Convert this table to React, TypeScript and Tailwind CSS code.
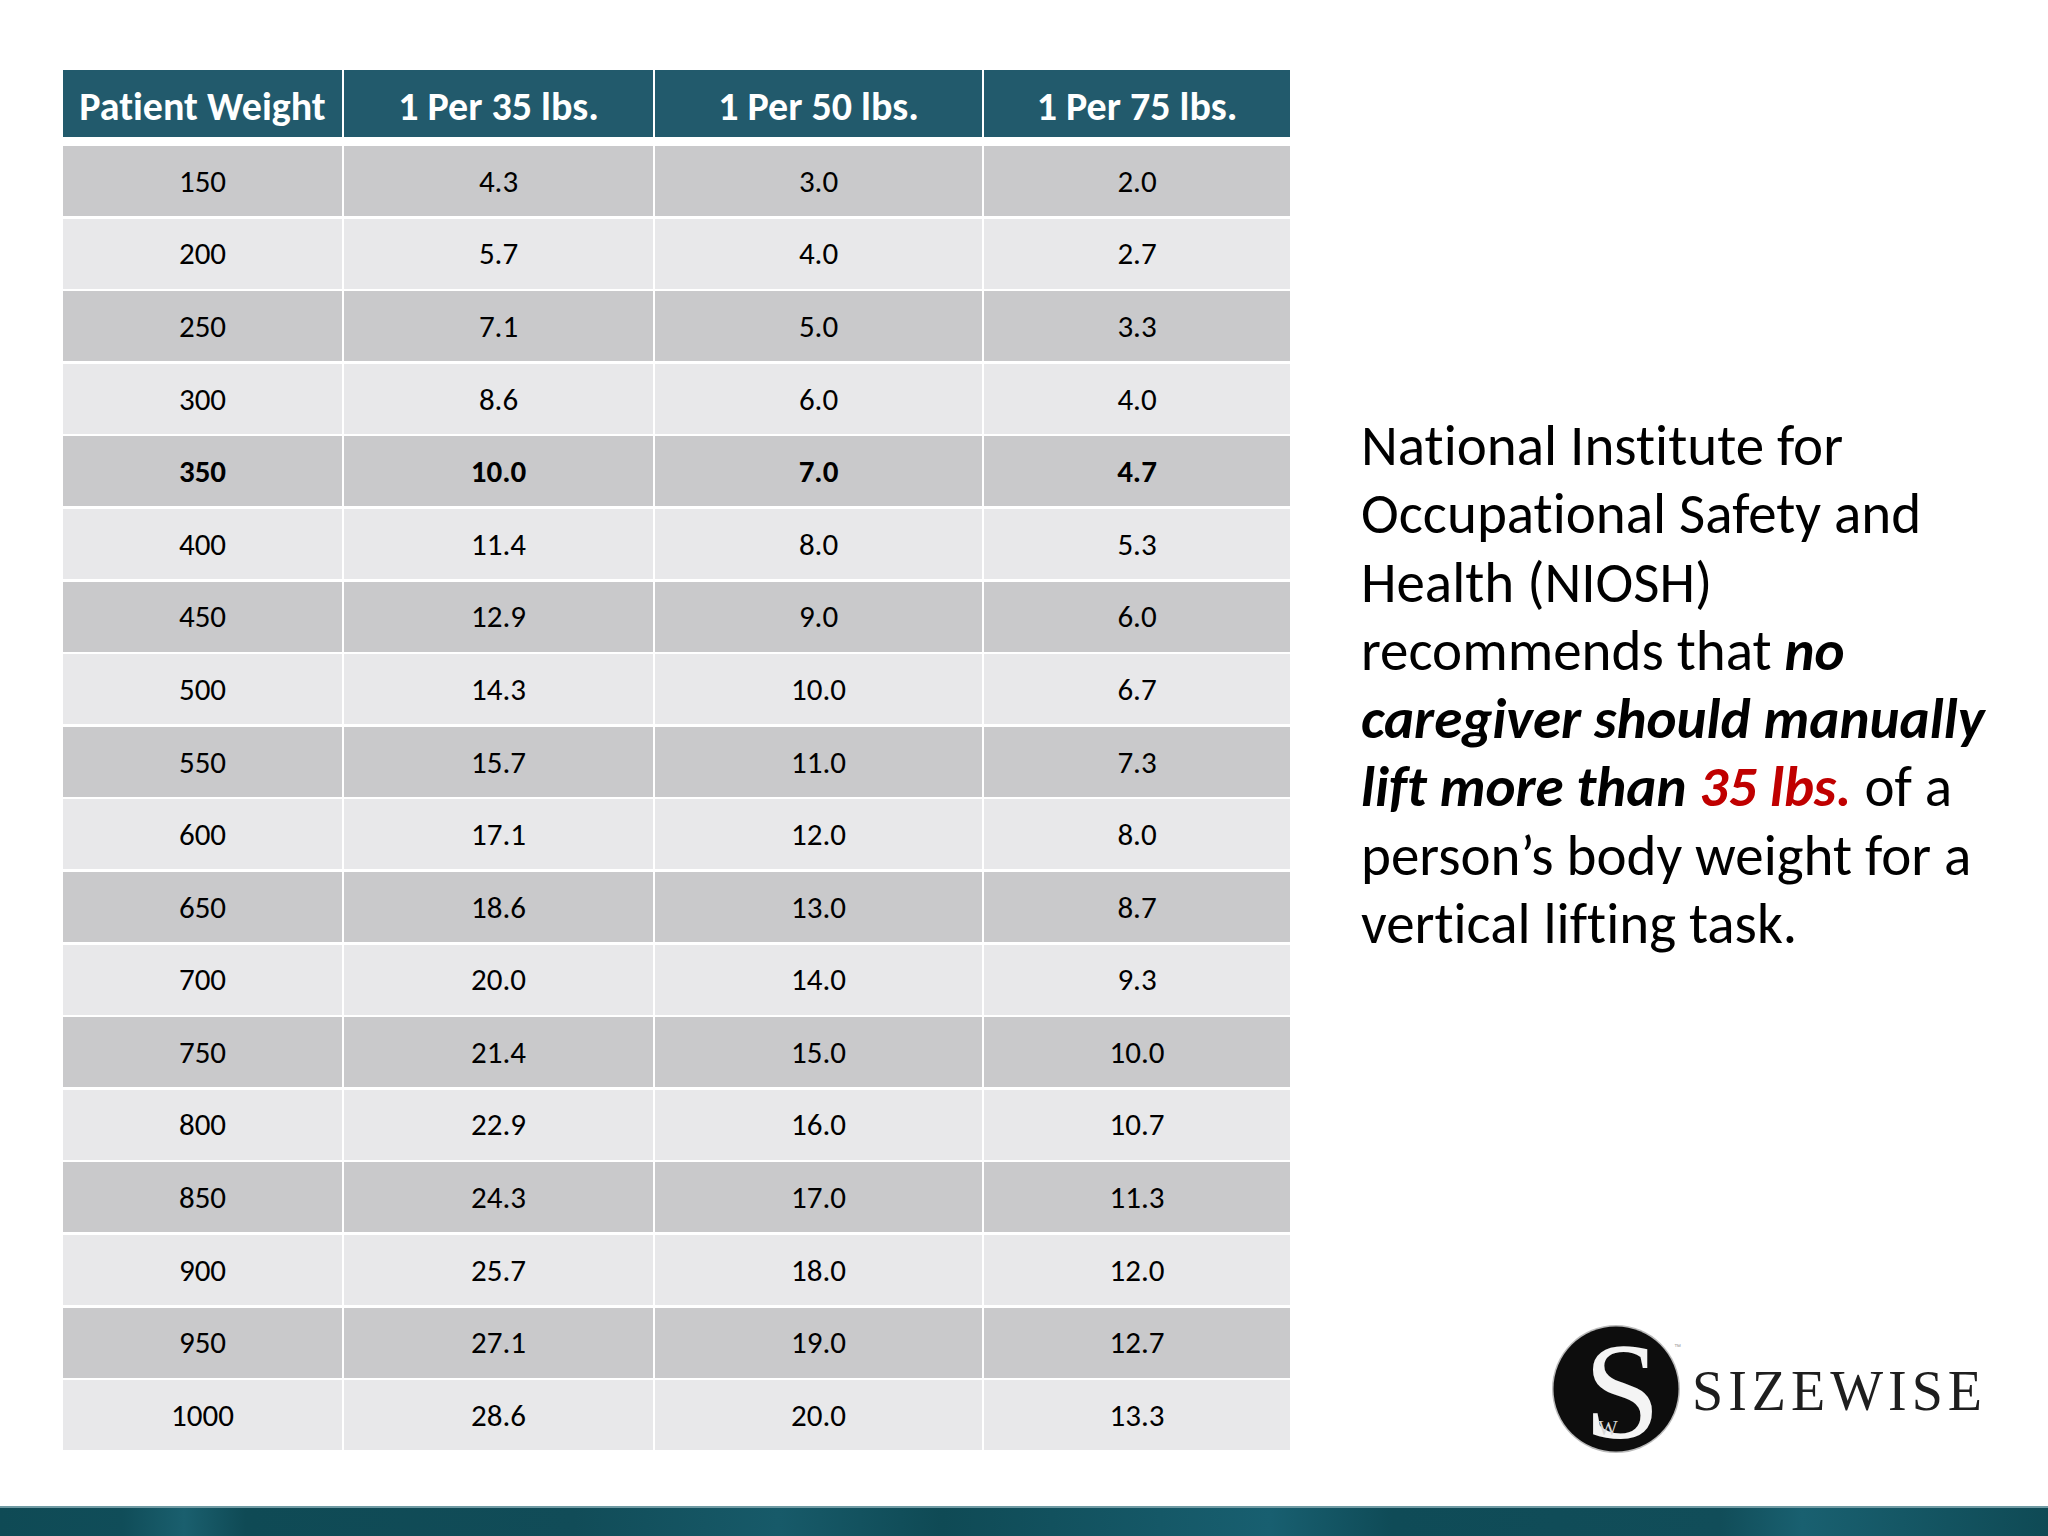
const rows: [string, string, string, string][] = [
  ["150", "4.3", "3.0", "2.0"],
  ["200", "5.7", "4.0", "2.7"],
  ["250", "7.1", "5.0", "3.3"],
  ["300", "8.6", "6.0", "4.0"],
  ["350", "10.0", "7.0", "4.7"],
  ["400", "11.4", "8.0", "5.3"],
  ["450", "12.9", "9.0", "6.0"],
  ["500", "14.3", "10.0", "6.7"],
  ["550", "15.7", "11.0", "7.3"],
  ["600", "17.1", "12.0", "8.0"],
  ["650", "18.6", "13.0", "8.7"],
  ["700", "20.0", "14.0", "9.3"],
  ["750", "21.4", "15.0", "10.0"],
  ["800", "22.9", "16.0", "10.7"],
  ["850", "24.3", "17.0", "11.3"],
  ["900", "25.7", "18.0", "12.0"],
  ["950", "27.1", "19.0", "12.7"],
  ["1000", "28.6", "20.0", "13.3"],
];

const headers = ["Patient Weight", "1 Per 35 lbs.", "1 Per 50 lbs.", "1 Per 75 lbs."];

function LiftTable() {
  return (
    <div className="flex flex-col">
      <div className="grid grid-cols-[279px_309px_327px_306px] gap-x-[2px] mb-[9px]">
        {headers.map((h) => (
          <div
            key={h}
            className="h-[67px] pt-[7px] bg-[#225a6c] text-white font-bold text-[40px] flex items-center justify-center"
          >
            {h}
          </div>
        ))}
      </div>
      <div className="grid grid-cols-[279px_309px_327px_306px] gap-x-[2px] gap-y-[2.6px]">
        {rows.map((r, i) =>
          r.map((cell, j) => (
            <div
              key={`${i}-${j}`}
              className={`h-[70px] flex items-center justify-center text-[31px] text-black ${
                i % 2 === 0 ? "bg-[#c9c9cb]" : "bg-[#e8e8ea]"
              } ${r[0] === "350" ? "font-bold" : ""}`}
            >
              {cell}
            </div>
          ))
        )}
      </div>
    </div>
  );
}

function SizewiseLogo() {
  return (
    <div className="flex items-center gap-[10px] ml-[189px]">
      <svg width="132" height="132" viewBox="-2 -2 132 132" className="shrink-0">
        <circle cx="64" cy="64" r="64" fill="#3a3a3a" opacity="0.35" />
        <circle cx="64" cy="64" r="62.5" fill="#0d0d0d" />
        <text
          x="70"
          y="113"
          textAnchor="middle"
          fontSize="138"
          fill="#f4f4f4"
          fontFamily="'Liberation Serif', serif"
        >
          S
        </text>
        <text
          x="56"
          y="110"
          textAnchor="middle"
          fontSize="21"
          fill="#d8d8d8"
          fontFamily="'Liberation Serif', serif"
        >
          W
        </text>
        <text x="122" y="24" fontSize="7" fill="#9a9a9a" fontFamily="'Liberation Sans', sans-serif">
          ™
        </text>
      </svg>
      <span className="text-[#1e1e1e] text-[56px] leading-none tracking-[5px] mt-[4px] [font-family:'Liberation_Serif',serif]">
        SIZEWISE
      </span>
    </div>
  );
}

export default function App() {
  return (
    <div className="w-[2048px] h-[1536px] bg-white flex flex-col overflow-hidden [font-variant-ligatures:none] [font-family:Carlito,Lato,'Liberation_Sans',sans-serif]">
      <div className="h-[1506px] pl-[63px] pt-[70px] flex">
        <LiftTable />
        <div className="flex flex-col justify-between ml-[71px] pb-[51px]">
          <p className="mt-[342px] text-[57px] leading-[68.3px] text-black">
            National Institute for
            <br />
            Occupational Safety and
            <br />
            Health (NIOSH)
            <br />
            recommends that <b className="italic">no</b>
            <br />
            <b className="italic">caregiver should manually</b>
            <br />
            <b className="italic">
              lift more than <span className="text-[#c00000]">35 lbs.</span>
            </b>{" "}
            of a
            <br />
            person’s body weight for a
            <br />
            vertical lifting task.
          </p>
          <SizewiseLogo />
        </div>
      </div>
      <div className="h-[30px] bg-[linear-gradient(90deg,#0f4a55_0%,#104d59_6%,#1a5f6e_9%,#0f4a55_12%,#114c58_28%,#175a69_38%,#0f4a55_46%,#185f70_62%,#0f4b57_68%,#114d59_84%,#196070_88%,#0f4a55_100%)] border-t-2 border-[#6f9aa3]" />
    </div>
  );
}
